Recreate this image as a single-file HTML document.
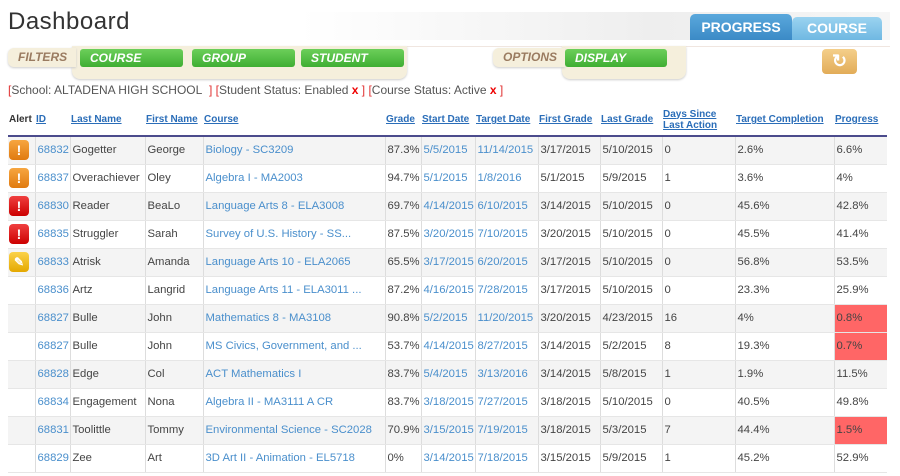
<!DOCTYPE html>
<html><head><style>
*{margin:0;padding:0;box-sizing:border-box}
body{width:900px;height:476px;background:#fff;font-family:"Liberation Sans",Arial,sans-serif;position:relative;overflow:hidden}
.abs{position:absolute}
h1{position:absolute;left:8px;top:8px;font-weight:normal;font-size:24px;color:#333;letter-spacing:0.5px}
.tabbar{left:300px;top:12px;width:590px;height:28px;background:linear-gradient(90deg,#fff 0%,#f4f4f4 40%,#eee 60%,#f6f6f6 100%)}
.tab{top:14px;height:26px;color:#fff;font-weight:bold;font-size:14px;text-align:center;line-height:26px;border-radius:5px 5px 0 0}
.panel{background:#f5efdc;border-radius:0 0 8px 8px;box-shadow:0 1px 2px #ccc}
.lbl{color:#9a7b60;font-style:italic;font-weight:bold;font-size:12px;background:#f5efdc;border-radius:6px 0 0 6px;box-shadow:0 1px 2px #ccc}
.btn{background:linear-gradient(#6ccf5a,#3fae33);border-radius:3px;color:#fff;font-style:italic;font-weight:bold;font-size:12px;padding-left:10px;line-height:18px;height:18px}
.crumb{left:8px;top:83px;font-size:12px;color:#555}
.crumb .r{color:#e03030}
.crumb .x{color:#e00;font-weight:bold}
table{position:absolute;left:8px;top:104px;border-collapse:collapse;table-layout:fixed;width:879px;font-size:11.3px;color:#444}
th{font-size:10px;font-weight:bold;text-align:left;vertical-align:middle;height:32px;padding-left:1px;color:#2a6db8;text-decoration:underline;border-bottom:2px solid #4b4b8c}
th.a{color:#333;text-decoration:none}
td{height:28px;padding-left:2px;border-left:1px solid #ddd;border-bottom:1px solid #e6e6e6;white-space:nowrap;overflow:hidden}
td:first-child{border-left:none;padding-left:0}
tr:nth-child(even) td{background:#f4f4f4}
.b{color:#4a8fcc}
.red{background:#f66 !important}
.ic{width:20px;height:20px;border-radius:4px;color:#fff;font-weight:bold;text-align:center;line-height:20px;font-size:14px;margin-left:1px}
.o{background:linear-gradient(#f7a640,#e07a10)}
.rd{background:linear-gradient(#f04040,#c00)}
.y{background:linear-gradient(#fbd24a,#e4a800);font-size:12px}
</style></head><body>
<h1>Dashboard</h1>
<div class="abs tabbar"></div>
<div class="abs tab" style="left:690px;width:102px;background:linear-gradient(#5aa8dc,#3b8ac6)">PROGRESS</div>
<div class="abs tab" style="left:792px;width:90px;top:17px;height:23px;line-height:23px;background:linear-gradient(#9bd3f0,#6fb8e2)">COURSE</div>
<div class="abs" style="left:300px;top:46px;width:590px;height:1px;background:#f0e6e0"></div>

<div class="abs panel" style="left:72px;top:46px;width:335px;height:33px"></div>
<div class="abs lbl" style="left:8px;top:48px;width:68px;height:19px;line-height:19px;padding-left:10px">FILTERS</div>
<div class="abs btn" style="left:80px;top:49px;width:103px">COURSE</div>
<div class="abs btn" style="left:192px;top:49px;width:103px">GROUP</div>
<div class="abs btn" style="left:301px;top:49px;width:103px">STUDENT</div>

<div class="abs panel" style="left:562px;top:46px;width:124px;height:33px"></div>
<div class="abs lbl" style="left:493px;top:48px;width:72px;height:19px;line-height:19px;padding-left:10px">OPTIONS</div>
<div class="abs btn" style="left:565px;top:49px;width:102px">DISPLAY</div>

<div class="abs" style="left:822px;top:49px;width:35px;height:25px;border-radius:4px;background:linear-gradient(#f4cf8a,#e2ac58);color:#fff;text-align:center;font-size:18px;line-height:25px;font-weight:bold">&#x21BB;</div>

<div class="abs crumb"><span class="r">[</span>School: ALTADENA HIGH SCHOOL&nbsp; <span class="r">] [</span>Student Status: Enabled <span class="x">x</span> <span class="r">] [</span>Course Status: Active <span class="x">x</span> <span class="r">]</span></div>

<table>
<colgroup><col style="width:27px"><col style="width:35px"><col style="width:75px"><col style="width:58px"><col style="width:182px"><col style="width:36px"><col style="width:54px"><col style="width:63px"><col style="width:62px"><col style="width:62px"><col style="width:73px"><col style="width:99px"><col style="width:53px"></colgroup>
<tr><th class="a">Alert</th><th>ID</th><th>Last Name</th><th>First Name</th><th>Course</th><th>Grade</th><th>Start Date</th><th>Target Date</th><th>First Grade</th><th>Last Grade</th><th>Days Since<br>Last Action</th><th>Target Completion</th><th>Progress</th></tr>
<tr><td><div class="ic o">!</div></td><td class="b">68832</td><td>Gogetter</td><td>George</td><td class="b">Biology - SC3209</td><td>87.3%</td><td class="b">5/5/2015</td><td class="b">11/14/2015</td><td>3/17/2015</td><td>5/10/2015</td><td>0</td><td>2.6%</td><td>6.6%</td></tr>
<tr><td><div class="ic o">!</div></td><td class="b">68837</td><td>Overachiever</td><td>Oley</td><td class="b">Algebra I - MA2003</td><td>94.7%</td><td class="b">5/1/2015</td><td class="b">1/8/2016</td><td>5/1/2015</td><td>5/9/2015</td><td>1</td><td>3.6%</td><td>4%</td></tr>
<tr><td><div class="ic rd">!</div></td><td class="b">68830</td><td>Reader</td><td>BeaLo</td><td class="b">Language Arts 8 - ELA3008</td><td>69.7%</td><td class="b">4/14/2015</td><td class="b">6/10/2015</td><td>3/14/2015</td><td>5/10/2015</td><td>0</td><td>45.6%</td><td>42.8%</td></tr>
<tr><td><div class="ic rd">!</div></td><td class="b">68835</td><td>Struggler</td><td>Sarah</td><td class="b">Survey of U.S. History - SS...</td><td>87.5%</td><td class="b">3/20/2015</td><td class="b">7/10/2015</td><td>3/20/2015</td><td>5/10/2015</td><td>0</td><td>45.5%</td><td>41.4%</td></tr>
<tr><td><div class="ic y">&#x270E;</div></td><td class="b">68833</td><td>Atrisk</td><td>Amanda</td><td class="b">Language Arts 10 - ELA2065</td><td>65.5%</td><td class="b">3/17/2015</td><td class="b">6/20/2015</td><td>3/17/2015</td><td>5/10/2015</td><td>0</td><td>56.8%</td><td>53.5%</td></tr>
<tr><td></td><td class="b">68836</td><td>Artz</td><td>Langrid</td><td class="b">Language Arts 11 - ELA3011 ...</td><td>87.2%</td><td class="b">4/16/2015</td><td class="b">7/28/2015</td><td>3/17/2015</td><td>5/10/2015</td><td>0</td><td>23.3%</td><td>25.9%</td></tr>
<tr><td></td><td class="b">68827</td><td>Bulle</td><td>John</td><td class="b">Mathematics 8 - MA3108</td><td>90.8%</td><td class="b">5/2/2015</td><td class="b">11/20/2015</td><td>3/20/2015</td><td>4/23/2015</td><td>16</td><td>4%</td><td class="red">0.8%</td></tr>
<tr><td></td><td class="b">68827</td><td>Bulle</td><td>John</td><td class="b">MS Civics, Government, and ...</td><td>53.7%</td><td class="b">4/14/2015</td><td class="b">8/27/2015</td><td>3/14/2015</td><td>5/2/2015</td><td>8</td><td>19.3%</td><td class="red">0.7%</td></tr>
<tr><td></td><td class="b">68828</td><td>Edge</td><td>Col</td><td class="b">ACT Mathematics I</td><td>83.7%</td><td class="b">5/4/2015</td><td class="b">3/13/2016</td><td>3/14/2015</td><td>5/8/2015</td><td>1</td><td>1.9%</td><td>11.5%</td></tr>
<tr><td></td><td class="b">68834</td><td>Engagement</td><td>Nona</td><td class="b">Algebra II - MA3111 A CR</td><td>83.7%</td><td class="b">3/18/2015</td><td class="b">7/27/2015</td><td>3/18/2015</td><td>5/10/2015</td><td>0</td><td>40.5%</td><td>49.8%</td></tr>
<tr><td></td><td class="b">68831</td><td>Toolittle</td><td>Tommy</td><td class="b">Environmental Science - SC2028</td><td>70.9%</td><td class="b">3/15/2015</td><td class="b">7/19/2015</td><td>3/18/2015</td><td>5/3/2015</td><td>7</td><td>44.4%</td><td class="red">1.5%</td></tr>
<tr><td></td><td class="b">68829</td><td>Zee</td><td>Art</td><td class="b">3D Art II - Animation - EL5718</td><td>0%</td><td class="b">3/14/2015</td><td class="b">7/18/2015</td><td>3/15/2015</td><td>5/9/2015</td><td>1</td><td>45.2%</td><td>52.9%</td></tr>
</table>
</body></html>
